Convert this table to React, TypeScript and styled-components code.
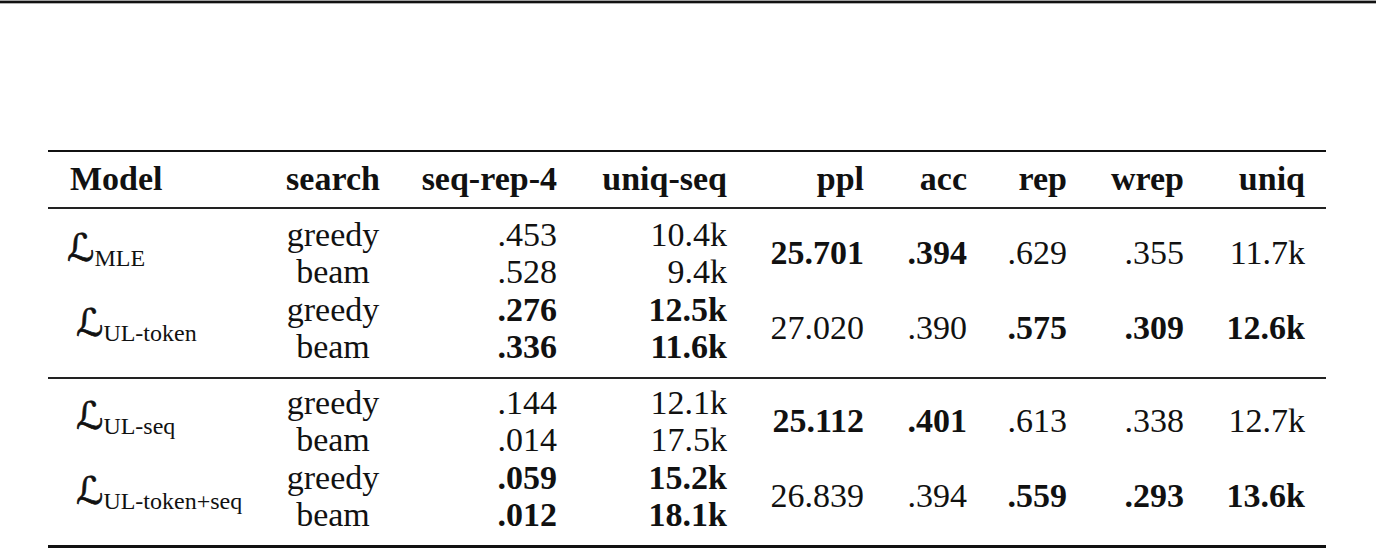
import React from 'react';
import styled, { createGlobalStyle } from 'styled-components';

type Align = 'left' | 'center' | 'right';

interface Value {
  text: string;
  bold?: boolean;
}

interface ModelRow {
  name: string;
  indent: boolean;
  lines: { search: string; seqRep: Value; uniqSeq: Value }[];
  metrics: Value[];
}

const COLUMNS = '212px 146px 151px 170px 137px 103px 100px 117px 121px';

const HEADERS: { label: string; align: Align }[] = [
  { label: 'Model', align: 'left' },
  { label: 'search', align: 'center' },
  { label: 'seq-rep-4', align: 'right' },
  { label: 'uniq-seq', align: 'right' },
  { label: 'ppl', align: 'right' },
  { label: 'acc', align: 'right' },
  { label: 'rep', align: 'right' },
  { label: 'wrep', align: 'right' },
  { label: 'uniq', align: 'right' },
];

const GROUPS: ModelRow[][] = [
  [
    {
      name: 'MLE',
      indent: false,
      lines: [
        { search: 'greedy', seqRep: { text: '.453' }, uniqSeq: { text: '10.4k' } },
        { search: 'beam', seqRep: { text: '.528' }, uniqSeq: { text: '9.4k' } },
      ],
      metrics: [
        { text: '25.701', bold: true },
        { text: '.394', bold: true },
        { text: '.629' },
        { text: '.355' },
        { text: '11.7k' },
      ],
    },
    {
      name: 'UL-token',
      indent: true,
      lines: [
        { search: 'greedy', seqRep: { text: '.276', bold: true }, uniqSeq: { text: '12.5k', bold: true } },
        { search: 'beam', seqRep: { text: '.336', bold: true }, uniqSeq: { text: '11.6k', bold: true } },
      ],
      metrics: [
        { text: '27.020' },
        { text: '.390' },
        { text: '.575', bold: true },
        { text: '.309', bold: true },
        { text: '12.6k', bold: true },
      ],
    },
  ],
  [
    {
      name: 'UL-seq',
      indent: true,
      lines: [
        { search: 'greedy', seqRep: { text: '.144' }, uniqSeq: { text: '12.1k' } },
        { search: 'beam', seqRep: { text: '.014' }, uniqSeq: { text: '17.5k' } },
      ],
      metrics: [
        { text: '25.112', bold: true },
        { text: '.401', bold: true },
        { text: '.613' },
        { text: '.338' },
        { text: '12.7k' },
      ],
    },
    {
      name: 'UL-token+seq',
      indent: true,
      lines: [
        { search: 'greedy', seqRep: { text: '.059', bold: true }, uniqSeq: { text: '15.2k', bold: true } },
        { search: 'beam', seqRep: { text: '.012', bold: true }, uniqSeq: { text: '18.1k', bold: true } },
      ],
      metrics: [
        { text: '26.839' },
        { text: '.394' },
        { text: '.559', bold: true },
        { text: '.293', bold: true },
        { text: '13.6k', bold: true },
      ],
    },
  ],
];

const App = () => (
  <>
    <GlobalStyle />
    <TopRule />
    <Table>
      <HeadRow>
        {HEADERS.map((h, i) => (
          <HeadCell key={h.label} $align={h.align} $first={i === 0}>
            {h.label}
          </HeadCell>
        ))}
      </HeadRow>

      {GROUPS.map((group, gi) => (
        <Group key={gi} $first={gi === 0} $last={gi === GROUPS.length - 1}>
          {group.map((row) => (
            <Row key={row.name}>
              <ModelCell $indent={row.indent}>
                <Script>ℒ</Script>
                <Sub>{row.name}</Sub>
              </ModelCell>
              <Stack $align='center'>
                {row.lines.map((l) => (
                  <Line key={l.search}>{l.search}</Line>
                ))}
              </Stack>
              <Stack $align='right'>
                {row.lines.map((l) => (
                  <Line key={l.search} $bold={l.seqRep.bold}>
                    {l.seqRep.text}
                  </Line>
                ))}
              </Stack>
              <Stack $align='right'>
                {row.lines.map((l) => (
                  <Line key={l.search} $bold={l.uniqSeq.bold}>
                    {l.uniqSeq.text}
                  </Line>
                ))}
              </Stack>
              {row.metrics.map((m, mi) => (
                <Cell key={mi} $bold={m.bold}>
                  {m.text}
                </Cell>
              ))}
            </Row>
          ))}
        </Group>
      ))}
    </Table>
  </>
);

export default App;

const GlobalStyle = createGlobalStyle`
  html, body {
    margin: 0;
    padding: 0;
    background: #fff;
  }

  body {
    width: 1376px;
    height: 552px;
    overflow: hidden;
    font-family: 'Liberation Serif', 'DejaVu Serif', serif;
    color: #111;
  }
`;

const TopRule = styled.div`
  height: 2px;
  background: #111;
  border-top: 1px solid #a0a0a0;
  border-bottom: 1px solid #b0b0b0;
`;

const Table = styled.div`
  width: 1278px;
  margin: 146px 0 0 48px;
  border-top: 2px solid #111;
  font-size: 34px;
  line-height: 37.5px;
`;

const HeadRow = styled.div`
  display: grid;
  grid-template-columns: ${COLUMNS};
  padding: 8px 21px 9px 0;
  border-bottom: 2px solid #222;
`;

const HeadCell = styled.div<{ $align: Align; $first: boolean }>`
  padding-left: ${({ $first }) => ($first ? '22px' : '0')};
  text-align: ${({ $align }) => $align};
  font-weight: 700;
  white-space: nowrap;
`;

const Group = styled.div<{ $first: boolean; $last: boolean }>`
  padding: ${({ $first }) => ($first ? '7px' : '5px')} 21px 11px 0;
  border-bottom: ${({ $last }) => ($last ? '3px solid #111' : '2px solid #222')};
`;

const Row = styled.div`
  display: grid;
  grid-template-columns: ${COLUMNS};
`;

const Cell = styled.div<{ $bold?: boolean }>`
  align-self: center;
  text-align: right;
  font-weight: ${({ $bold }) => ($bold ? 700 : 400)};
  white-space: nowrap;
`;

const Stack = styled.div<{ $align: Align }>`
  display: flex;
  flex-direction: column;
  text-align: ${({ $align }) => $align};
`;

const Line = styled.div<{ $bold?: boolean }>`
  font-weight: ${({ $bold }) => ($bold ? 700 : 400)};
  white-space: nowrap;
`;

const ModelCell = styled.div<{ $indent: boolean }>`
  align-self: center;
  padding-left: ${({ $indent }) => ($indent ? '28px' : '19px')};
  white-space: nowrap;
`;

const Script = styled.span`
  font-family: 'DejaVu Sans', 'DejaVu Serif', serif;
  font-size: 38px;
  line-height: 1;
  -webkit-text-stroke: 0.7px currentColor;
`;

const Sub = styled.span`
  font-size: 24px;
  vertical-align: -5px;
`;
